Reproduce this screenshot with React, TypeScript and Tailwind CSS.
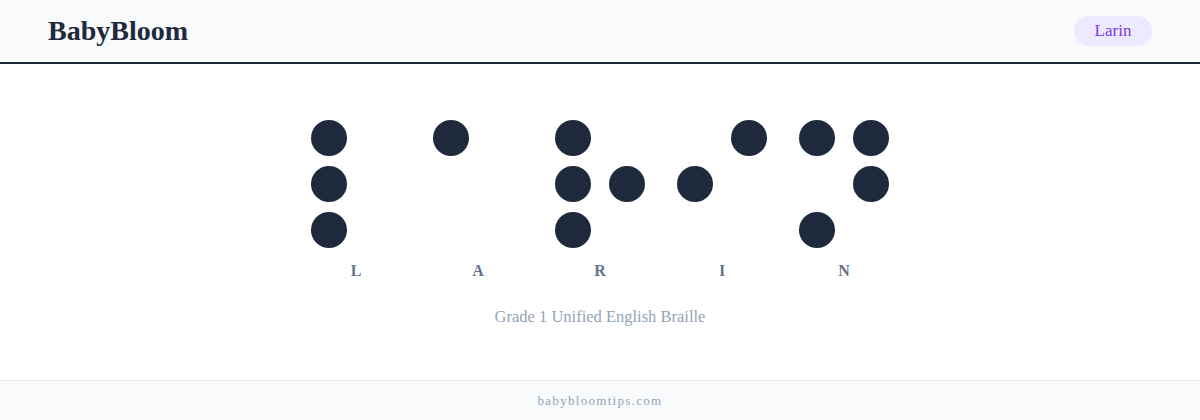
import React from 'react'

// Braille cells: dots numbered 1-3 down the left column, 4-6 down the right
const CELLS: { letter: string; dots: number[] }[] = [
  { letter: 'L', dots: [1, 2, 3] },
  { letter: 'A', dots: [1] },
  { letter: 'R', dots: [1, 2, 3, 5] },
  { letter: 'I', dots: [2, 4] },
  { letter: 'N', dots: [1, 3, 4, 5] },
]

const ORDER = [1, 4, 2, 5, 3, 6]

function BrailleCell({ letter, dots }: { letter: string; dots: number[] }) {
  return (
    <div className="flex flex-col items-center">
      <div className="grid grid-cols-[36px_36px] gap-x-[18px] gap-y-[10px]">
        {ORDER.map(n => (
          <span
            key={n}
            className={
              dots.includes(n)
                ? 'h-9 w-9 rounded-full bg-[#1e293b]'
                : 'h-9 w-9 rounded-full bg-transparent'
            }
          />
        ))}
      </div>
      <span className="mt-[13px] text-[16px] leading-5 font-semibold text-[#64748b]">{letter}</span>
    </div>
  )
}

export default function App() {
  return (
    <div
      className="flex h-screen flex-col bg-white"
      style={{ fontFamily: '"Liberation Serif", "DejaVu Serif", serif' }}
    >
      {/* Header */}
      <header className="flex h-16 shrink-0 items-center justify-between border-b-2 border-[#1e293b] bg-[#f8fafc] px-12">
        <h1 className="text-[28px] font-bold text-[#1e293b]">BabyBloom</h1>
        <span className="flex h-[30px] w-[78px] items-center justify-center rounded-full bg-[#ede9fe] text-[17px] font-medium text-[#7c3aed]">
          Larin
        </span>
      </header>

      {/* Braille */}
      <main className="flex flex-1 flex-col items-center justify-center pt-[4px]">
        <div className="flex gap-8">
          {CELLS.map(c => (
            <BrailleCell key={c.letter} letter={c.letter} dots={c.dots} />
          ))}
        </div>
        <p className="mt-[24px] text-[16.5px] leading-6 text-[#94a3b8]">Grade 1 Unified English Braille</p>
      </main>

      {/* Footer */}
      <footer className="flex h-10 shrink-0 items-center justify-center border-t border-[#e2e8f0] bg-[#f8fafc]">
        <span className="text-[13px] tracking-[0.1em] text-[#94a3b8]">babybloomtips.com</span>
      </footer>
    </div>
  )
}
